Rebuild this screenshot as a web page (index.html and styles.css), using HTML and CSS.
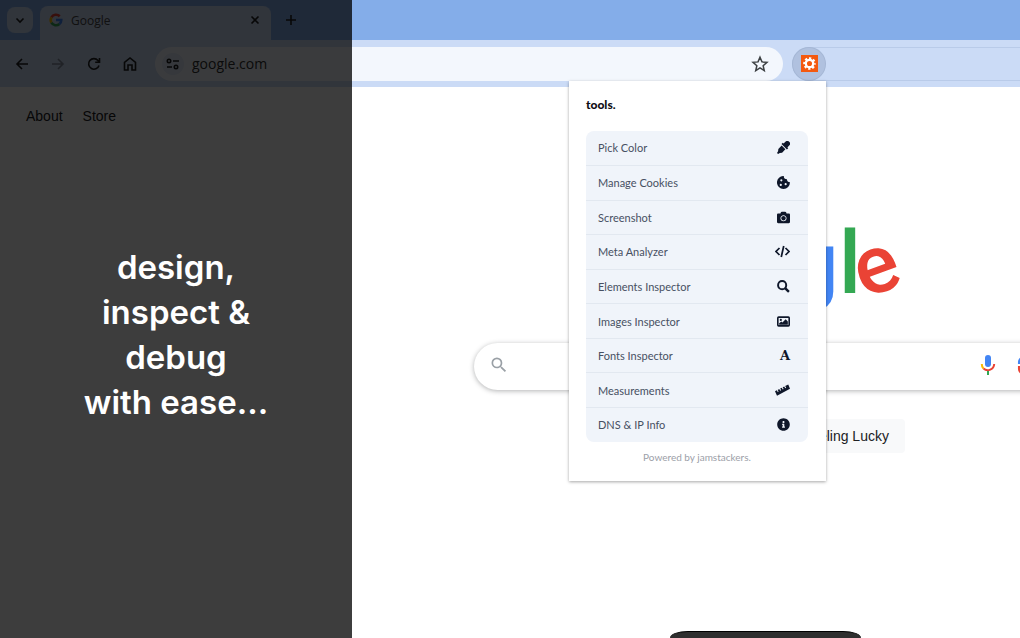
FILE: index.html
```html
<!DOCTYPE html>
<html lang="en">

<head>
    <meta charset="UTF-8">
    <title>tools.</title>
    <link rel="stylesheet" href="styles.css">
</head>

<body>
    <!-- tab strip -->
    <div class="tabs">
        <button class="tab-search" aria-label="Search tabs">
            <svg width="12" height="12" viewBox="0 0 12 12"><path d="M2.500 4.500l3.500 3.500 3.500-3.500" class="line" /></svg>
        </button>
        <div class="tab">
            <svg width="14" height="14" viewBox="0 0 24 24" fill="none" stroke-width="4.500">
                <path d="M4.200 7.500A9 9 0 0 1 18.400 5.600" stroke="#ea4335" />
                <path d="M4.200 16.500A9 9 0 0 1 4.200 7.500" stroke="#fbbc05" />
                <path d="M17.800 18.900A9 9 0 0 1 4.200 16.500" stroke="#34a853" />
                <path d="M12 12h9A9 9 0 0 1 17.800 18.900" stroke="#4285f4" />
            </svg>
            <span class="tab-title">Google</span>
            <button class="icon-btn" aria-label="Close tab">
                <svg width="12" height="12" viewBox="0 0 12 12"><path d="M2.500 2.500l7 7M9.500 2.500l-7 7" class="line" /></svg>
            </button>
        </div>
        <button class="icon-btn new-tab" aria-label="New tab">
            <svg width="14" height="14" viewBox="0 0 14 14"><path d="M7 2v10M2 7h10" class="line" /></svg>
        </button>
    </div>

    <!-- toolbar -->
    <div class="toolbar">
        <div class="nav-btns">
            <button class="icon-btn" aria-label="Back">
                <svg width="16" height="16" viewBox="0 0 16 16"><path d="M14 8H3M8 3L3 8l5 5" class="line" /></svg>
            </button>
            <button class="icon-btn faded" aria-label="Forward">
                <svg width="16" height="16" viewBox="0 0 16 16"><path d="M2 8h11M8 3l5 5-5 5" class="line" /></svg>
            </button>
            <button class="icon-btn" aria-label="Reload">
                <svg width="16" height="16" viewBox="0 0 16 16"><path d="M13 9.500A5.300 5.300 0 1 1 12 4.500L13.200 6M13.500 2v4.300H9.200" class="line" /></svg>
            </button>
            <button class="icon-btn" aria-label="Home">
                <svg width="16" height="16" viewBox="0 0 16 16"><path d="M2.500 14V6.500L8 2l5.500 4.500V14H10V9H6v5z" class="line" /></svg>
            </button>
        </div>
        <div class="omnibox">
            <span class="site-info">
                <svg width="14" height="14" viewBox="0 0 14 14"><path d="M7 4h6M1 10h5" class="line" /><circle cx="3" cy="4" r="1.700" class="line" /><circle cx="10" cy="10" r="1.700" class="line" /></svg>
            </span>
            <input class="url" type="text" value="google.com" aria-label="Address">
            <button class="icon-btn" aria-label="Bookmark this page">
                <svg width="18" height="18" viewBox="0 0 24 24"><path d="M12 3l2.600 6.200 6.700.600-5.100 4.400 1.500 6.600-5.700-3.500-5.700 3.500 1.500-6.600-5.100-4.400 6.700-.600z" fill="none" stroke="#3c4043" stroke-width="2" /></svg>
            </button>
        </div>
        <div class="extensions">
            <button class="ext-btn" aria-label="tools.">
                <svg width="17" height="17" viewBox="0 0 17 17">
                    <rect width="17" height="17" fill="#f4590f" />
                    <circle cx="8.500" cy="8.500" r="5.300" fill="none" stroke="#fff" stroke-width="2" stroke-dasharray="2.300 1.863" stroke-dashoffset="1.150" />
                    <circle cx="8.500" cy="8.500" r="3.700" fill="none" stroke="#fff" stroke-width="2.300" />
                </svg>
            </button>

            <!-- extension popup -->
            <div class="popup">
                <h2 class="popup-title">tools.</h2>
                <ul class="tool-list">
                    <li><button class="tool">Pick Color
                        <svg width="13" height="13" viewBox="0 0 24 24"><path d="M22.500 1.500a5 5 0 0 0-7 0l-3.300 3.300-1.500-1.500-2.400 2.400 10 10 2.400-2.400-1.500-1.500 3.300-3.300a5 5 0 0 0 0-7zM8.600 8.500L2.500 14.600 2 18.800 0 22l2 2 3.200-2 4.200-.500 6.100-6.100z" /></svg>
                    </button></li>
                    <li><button class="tool">Manage Cookies
                        <svg width="13" height="13" viewBox="0 0 24 24"><path fill-rule="evenodd" d="M12.500 0a6 6 0 0 0 5.800 6 6 6 0 0 0 5.600 5.600A12 12 0 1 1 12.500 0zM8 6a2 2 0 1 0 0 4 2 2 0 0 0 0-4zM7 14.500a2 2 0 1 0 0 4 2 2 0 0 0 0-4zM16 13a2 2 0 1 0 0 4 2 2 0 0 0 0-4z" /></svg>
                    </button></li>
                    <li><button class="tool">Screenshot
                        <svg width="13" height="13" viewBox="0 0 512 512"><path d="M512 144v288c0 26.500-21.500 48-48 48H48c-26.500 0-48-21.500-48-48V144c0-26.500 21.500-48 48-48h88l12.300-32.900c7-18.700 24.900-31.100 44.900-31.100h125.500c20 0 37.900 12.400 44.900 31.100L376 96h88c26.500 0 48 21.500 48 48zM376 288c0-66.200-53.800-120-120-120s-120 53.800-120 120 53.800 120 120 120 120-53.800 120-120zm-32 0c0 48.500-39.500 88-88 88s-88-39.500-88-88 39.500-88 88-88 88 39.500 88 88z" /></svg>
                    </button></li>
                    <li><button class="tool">Meta Analyzer
                        <svg width="15" height="13" viewBox="0 0 30 26"><path d="M9 6l-7 7 7 7M21 6l7 7-7 7M17.500 2l-5 22" fill="none" stroke="#0f172a" stroke-width="3.500" /></svg>
                    </button></li>
                    <li><button class="tool">Elements Inspector
                        <svg width="13" height="13" viewBox="0 0 24 24"><circle cx="9.500" cy="9.500" r="7.500" fill="none" stroke="#0f172a" stroke-width="3.600" /><path d="M15 15l7 7" stroke="#0f172a" stroke-width="4.500" /></svg>
                    </button></li>
                    <li><button class="tool">Images Inspector
                        <svg width="13" height="13" viewBox="0 0 24 24"><rect x="1.500" y="4" width="21" height="16" rx="1.500" fill="none" stroke="#0f172a" stroke-width="3" /><circle cx="7" cy="9" r="2" /><path d="M4 18v-3l4-3 2 2 6-6 4 4v6z" /></svg>
                    </button></li>
                    <li><button class="tool">Fonts Inspector
                        <span class="letter" aria-hidden="true">A</span>
                    </button></li>
                    <li><button class="tool">Measurements
                        <svg width="15" height="13" viewBox="0 0 30 26"><path d="M0 14.500L3.500 12.700 5.500 16.200 7.300 15.200 5.300 11.800 8.500 10.200 10.500 13.700 12.300 12.700 10.300 9.200 13.500 7.600 15.500 11.100 17.300 10.100 15.300 6.600 18.500 5 20.500 8.500 22.300 7.500 20.300 4 26.500 1 30 9.500 4 23.500z" /></svg>
                    </button></li>
                    <li><button class="tool">DNS &amp; IP Info
                        <svg width="13" height="13" viewBox="0 0 512 512"><path d="M256 8C119 8 8 119 8 256s111 248 248 248 248-111 248-248S393 8 256 8zm0 110c23.200 0 42 18.800 42 42s-18.800 42-42 42-42-18.800-42-42 18.800-42 42-42zm56 254c0 6.600-5.400 12-12 12h-88c-6.600 0-12-5.400-12-12v-24c0-6.600 5.400-12 12-12h12v-64h-12c-6.600 0-12-5.400-12-12v-24c0-6.600 5.400-12 12-12h64c6.600 0 12 5.400 12 12v100h12c6.600 0 12 5.400 12 12v24z" /></svg>
                    </button></li>
                </ul>
                <p class="powered">Powered by jamstackers.</p>
            </div>
        </div>
    </div>

    <!-- page -->
    <nav class="links">
        <a href="#">About</a>
        <a href="#">Store</a>
    </nav>
    <main class="content">
        <div class="logo"><span class="blue">G</span><span class="red">o</span><span class="yellow">o</span><span class="blue">g</span><span class="green">l</span><span class="red tilt">e</span></div>
        <form class="search">
            <svg width="20" height="20" viewBox="0 0 24 24" fill="#9aa0a6"><path d="M15.500 14h-.790l-.280-.270A6.470 6.470 0 0 0 16 9.500 6.500 6.500 0 1 0 9.500 16c1.610 0 3.090-.590 4.230-1.570l.270.280v.790l5 4.990L20.490 19l-4.990-5zm-6 0C7.010 14 5 11.990 5 9.500S7.010 5 9.500 5 14 7.010 14 9.500 11.990 14 9.500 14z" /></svg>
            <input class="search-input" type="text" aria-label="Search">
            <button class="icon-btn" type="button" aria-label="Search by voice">
                <svg width="24" height="24" viewBox="0 0 24 24" fill="none">
                    <rect x="9" y="2" width="6" height="12" rx="3" fill="#4285f4" />
                    <path d="M5.800 11a6.500 6.500 0 0 0 1.700 4.600" stroke="#fbbc04" stroke-width="2" />
                    <path d="M7.500 15.600a6.500 6.500 0 0 0 10.700-4.600" stroke="#ea4335" stroke-width="2" />
                    <path d="M12 18v4" stroke="#34a853" stroke-width="2" />
                </svg>
            </button>
            <button class="icon-btn" type="button" aria-label="Search by image">
                <svg width="24" height="24" viewBox="0 0 24 24" fill="none" stroke-width="2.500">
                    <path d="M3.200 11V9a4 4 0 0 1 4-4h9.600a4 4 0 0 1 4 4v4" stroke="#4285f4" />
                    <path d="M3.200 13v3a4 4 0 0 0 4 4H12" stroke="#ea4335" />
                    <circle cx="12" cy="12.500" r="3" fill="#4285f4" />
                    <circle cx="18.500" cy="18.500" r="2" fill="#34a853" />
                </svg>
            </button>
        </form>
        <div class="buttons">
            <button class="search-btn">Google Search</button>
            <button class="search-btn">I'm Feeling Lucky</button>
        </div>
    </main>

    <!-- dark cover with the headline -->
    <div class="cover">
        <h1 class="headline">design,<br>inspect &amp;<br>debug<br>with ease...</h1>
    </div>
    <div class="bottom-bar"></div>
</body>

</html>
```
FILE: styles.css
```css
* {
    box-sizing: border-box;
    margin: 0;
    padding: 0;
}

body {
    position: relative;
    min-height: 100vh;
    overflow: hidden;
    background: #fff;
    font-family: "Liberation Sans", Arial, sans-serif;
    font-size: 14px;
    color: #202124;
}

button,
input {
    border: 0;
    background: none;
    font: inherit;
    color: inherit;
    outline: none;
}

svg {
    display: block;
    flex-shrink: 0;
}

.line {
    fill: none;
    stroke: #1f1f1f;
    stroke-width: 1.6;
}

.icon-btn {
    display: flex;
    align-items: center;
    justify-content: center;
}

.faded {
    opacity: 0.4;
}

/* tab strip */
.tabs {
    display: flex;
    align-items: center;
    height: 40px;
    padding-left: 7px;
    background: #84ade9;
}

.tab-search {
    display: flex;
    align-items: center;
    justify-content: center;
    width: 26px;
    height: 26px;
    border-radius: 8px;
    background: #cbdbf6;
}

.tab {
    display: flex;
    align-items: center;
    align-self: flex-end;
    gap: 8px;
    width: 231px;
    height: 34px;
    margin-left: 7px;
    padding: 0 10px 6px 9px;
    border-radius: 8px 8px 0 0;
    background: #cbdbf6;
}

.tab-title {
    flex: 1;
    font: 12px "Open Sans", sans-serif;
    color: #474747;
}

.new-tab {
    margin-left: 13px;
}

/* toolbar */
.toolbar {
    display: flex;
    align-items: center;
    height: 47px;
    padding-left: 14px;
    background: #cbdbf6;
}

.nav-btns {
    display: flex;
    gap: 20px;
    width: 141px;
}

.omnibox {
    display: flex;
    flex: 1;
    align-items: center;
    min-width: 0;
    height: 34px;
    padding: 0 14px 0 7px;
    border-radius: 17px;
    background: #f3f7fd;
}

.site-info {
    display: flex;
    align-items: center;
    justify-content: center;
    width: 22px;
    height: 22px;
    border-radius: 50%;
    background: #dfe8f8;
}

.url {
    flex: 1;
    min-width: 0;
    margin-left: 8px;
    font: 14px "Open Sans", sans-serif;
    color: #303030;
}

.extensions {
    position: relative;
    width: 228px;
    margin-left: 9px;
    border: 1px solid #b9cbe9;
    border-right: 0;
    border-radius: 17px 0 0 17px;
}

.ext-btn {
    display: flex;
    align-items: center;
    justify-content: center;
    width: 32px;
    height: 32px;
    border-radius: 50%;
    background: #b0c1df;
    box-shadow: 0 0 0 1px #a5b7d5;
}

/* popup hangs under the extension button */
.popup {
    position: absolute;
    top: 100%;
    right: 194px;
    z-index: 1;
    width: 257px;
    margin-top: 1px;
    padding: 16px 18px 16px 17px;
    background: #fff;
    box-shadow: 0 1px 3px rgba(0, 0, 0, 0.35);
    font-family: Lato, sans-serif;
}

.popup-title {
    font-size: 12px;
    font-weight: 900;
    line-height: 16px;
    color: #0f0f14;
}

.tool-list {
    display: grid;
    grid-auto-rows: 1fr;
    min-height: 311px;
    margin-top: 18px;
    border-radius: 8px;
    background: #f0f4fa;
    list-style: none;
}

.tool-list li {
    display: flex;
}

.tool-list li + li {
    border-top: 1px solid #e2e8f0;
}

.tool {
    display: flex;
    flex: 1;
    align-items: center;
    justify-content: space-between;
    padding: 0 18px 0 12px;
    font-size: 11px;
    color: #475062;
}

.tool svg {
    fill: #0f172a;
}

.letter {
    font: bold 13px "DejaVu Serif", serif;
    color: #0f172a;
}

.powered {
    margin-top: 7px;
    font-size: 10px;
    line-height: 16px;
    text-align: center;
    color: #9ca0a8;
}

/* page */
.links {
    display: flex;
    gap: 20px;
    padding: 21px 26px;
}

.links a {
    line-height: 16px;
    color: #202124;
    text-decoration: none;
}

.content {
    width: 584px;
    margin-left: 474px;
}

.logo {
    padding: 62px 6px 0 0;
    font: 500 88px/112px Roboto, sans-serif;
    text-align: center;
}

.blue {
    color: #4285f4;
}

.red {
    color: #ea4335;
}

.yellow {
    color: #fbbc05;
}

.green {
    color: #34a853;
}

/* the last letter leans back */
.tilt {
    display: inline-block;
    margin-left: -8px;
    font-size: 82px;
    transform: rotate(-20deg);
}

.search {
    display: flex;
    align-items: center;
    gap: 16px;
    height: 47px;
    margin-top: 22px;
    padding: 0 18px 0 15px;
    border-radius: 24px;
    box-shadow: 0 1px 5px rgba(32, 33, 36, 0.35);
}

.search svg {
    margin-bottom: 3px;
}

.search-input {
    flex: 1;
    min-width: 0;
}

.buttons {
    display: flex;
    justify-content: center;
    gap: 12px;
    margin-top: 29px;
}

.search-btn {
    height: 34px;
    padding: 0 16px;
    border-radius: 4px;
    background: #f8f9fa;
}

/* cover */
.cover {
    position: absolute;
    top: 0;
    bottom: 0;
    left: 0;
    display: flex;
    align-items: center;
    justify-content: center;
    width: 352px;
    padding-top: 32px;
    background: rgba(0, 0, 0, 0.76);
}

.headline {
    font: 600 33px/45px Inter, sans-serif;
    color: #fff;
    text-align: center;
}

.bottom-bar {
    position: absolute;
    bottom: 0;
    left: 670px;
    width: 191px;
    height: 7px;
    border-top: 1px solid #000;
    border-radius: 18px 18px 0 0 / 7px 7px 0 0;
    background: #2f2f2f;
}
```
